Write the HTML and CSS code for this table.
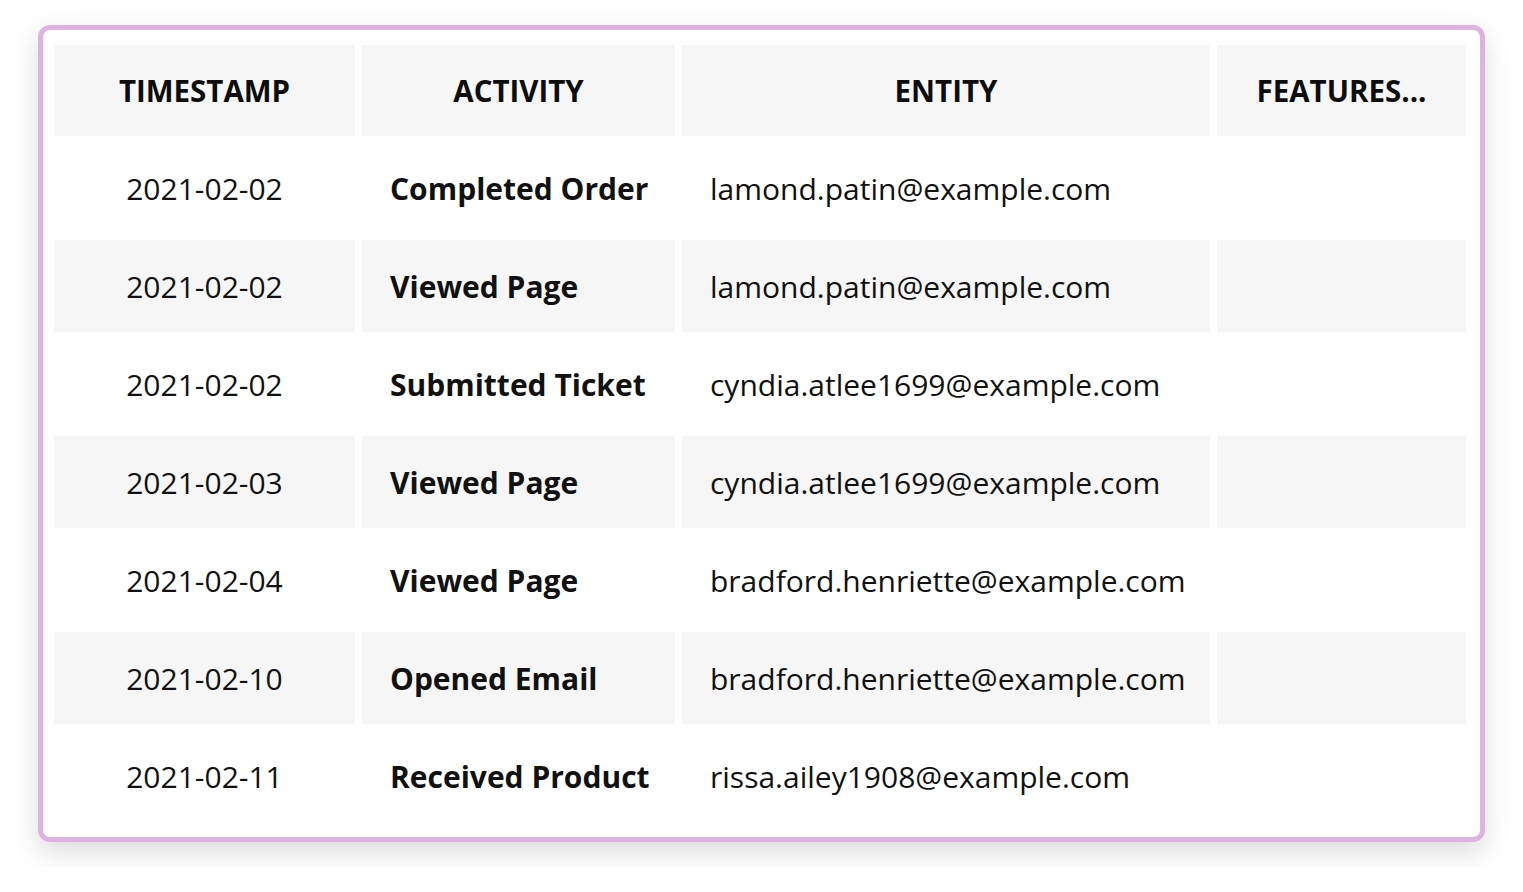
FILE: index.html
```html
<!DOCTYPE html>
<html>
<head>
<meta charset="utf-8">
<link rel="stylesheet" href="styles.css">
</head>
<body>
<div class="card">
  <table class="grid">
    <colgroup>
      <col class="c1"><col class="c2"><col class="c3"><col class="c4">
    </colgroup>
    <thead>
      <tr><th>TIMESTAMP</th><th>ACTIVITY</th><th>ENTITY</th><th>FEATURES...</th></tr>
    </thead>
    <tbody>
      <tr><td class="ts">2021-02-02</td><td class="act">Completed Order</td><td class="ent">lamond.patin@example.com</td><td></td></tr>
      <tr><td class="ts">2021-02-02</td><td class="act">Viewed Page</td><td class="ent">lamond.patin@example.com</td><td></td></tr>
      <tr><td class="ts">2021-02-02</td><td class="act">Submitted Ticket</td><td class="ent">cyndia.atlee1699@example.com</td><td></td></tr>
      <tr><td class="ts">2021-02-03</td><td class="act">Viewed Page</td><td class="ent">cyndia.atlee1699@example.com</td><td></td></tr>
      <tr><td class="ts">2021-02-04</td><td class="act">Viewed Page</td><td class="ent">bradford.henriette@example.com</td><td></td></tr>
      <tr><td class="ts">2021-02-10</td><td class="act">Opened Email</td><td class="ent">bradford.henriette@example.com</td><td></td></tr>
      <tr><td class="ts">2021-02-11</td><td class="act">Received Product</td><td class="ent">rissa.ailey1908@example.com</td><td></td></tr>
    </tbody>
  </table>
</div>
</body>
</html>
```

FILE: styles.css
```css
html, body {
  margin: 0;
  padding: 0;
  background: #ffffff;
}
body {
  padding: 25px 38px;
  font-family: "Open Sans", "Noto Sans", sans-serif;
  color: #111111;
}
.card {
  box-sizing: border-box;
  width: 1447px;
  height: 817px;
  border: 5px solid #dfb3e1;
  border-radius: 12px;
  background: #ffffff;
  padding: 9px 7px 8px 4px;
  box-shadow: 0 10px 28px rgba(0, 0, 0, 0.14);
}
.grid {
  border-collapse: separate;
  border-spacing: 7px 6px;
  table-layout: fixed;
}
.c1 { width: 301px; }
.c2 { width: 313px; }
.c3 { width: 528px; }
.c4 { width: 249px; }
.grid th {
  height: 91px;
  padding: 0;
  background: #f6f6f6;
  font-size: 29.5px;
  font-weight: 700;
  text-align: center;
  color: #0d0d0d;
}
.grid td {
  height: 91px;
  padding: 1px 0 0 0;
  font-size: 30px;
  color: #111111;
}
.grid tbody tr:nth-child(even) td {
  background: #f6f6f6;
}
.ts {
  text-align: center;
}
.grid td.act {
  padding-left: 28px;
  font-weight: 700;
  white-space: nowrap;
}
.grid td.ent {
  padding-left: 28px;
  white-space: nowrap;
}
```
